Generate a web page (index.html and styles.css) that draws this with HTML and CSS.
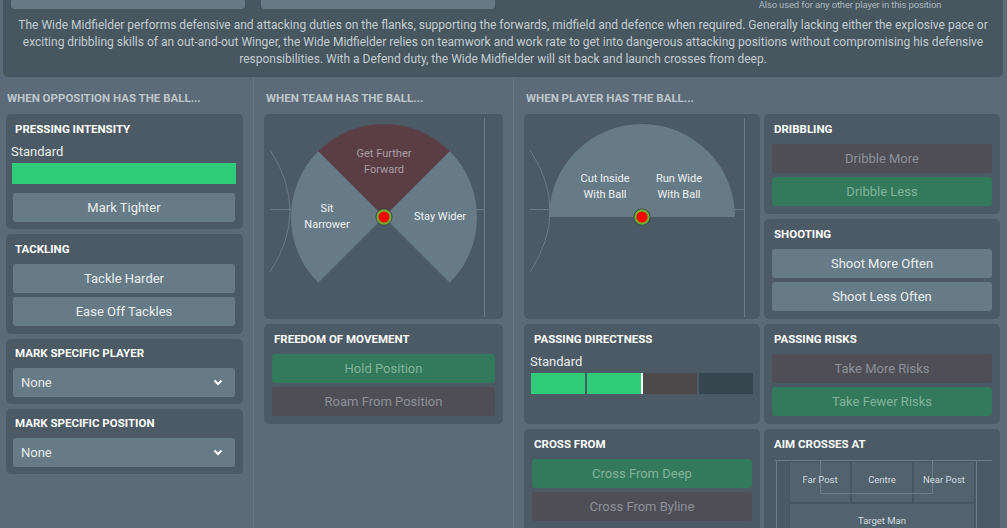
FILE: index.html
```html
<!DOCTYPE html>
<html>
<head>
<meta charset="utf-8">
<link rel="stylesheet" href="styles.css">
</head>
<body>
<header class="top">
  <div class="top-row">
    <div class="tab-btn"></div>
    <div class="tab-btn"></div>
    <div class="also">Also used for any other player in this position</div>
  </div>
  <p class="desc">The Wide Midfielder performs defensive and attacking duties on the flanks, supporting the forwards, midfield and defence when required. Generally lacking either the explosive pace or<br>exciting dribbling skills of an out-and-out Winger, the Wide Midfielder relies on teamwork and work rate to get into dangerous attacking positions without compromising his defensive<br>responsibilities. With a Defend duty, the Wide Midfielder will sit back and launch crosses from deep.</p>
</header>

<main class="cols">
  <section class="col col1">
    <h2 class="col-head">WHEN OPPOSITION HAS THE BALL...</h2>
    <div class="stack">
      <div class="card card-slider">
        <h3 class="card-title">PRESSING INTENSITY</h3>
        <div class="level">Standard</div>
        <div class="bar-full"></div>
        <div class="btn btn-neutral btn-after-bar">Mark Tighter</div>
      </div>
      <div class="card">
        <h3 class="card-title">TACKLING</h3>
        <div class="btns">
          <div class="btn btn-neutral">Tackle Harder</div>
          <div class="btn btn-neutral">Ease Off Tackles</div>
        </div>
      </div>
      <div class="card card-select">
        <h3 class="card-title">MARK SPECIFIC PLAYER</h3>
        <div class="select"><span>None</span><svg class="chev" width="10" height="7" viewBox="0 0 10 7"><path d="M1.5 1.5 L5 5 L8.5 1.5" fill="none" stroke="#ffffff" stroke-width="2"/></svg></div>
      </div>
      <div class="card card-select">
        <h3 class="card-title">MARK SPECIFIC POSITION</h3>
        <div class="select"><span>None</span><svg class="chev" width="10" height="7" viewBox="0 0 10 7"><path d="M1.5 1.5 L5 5 L8.5 1.5" fill="none" stroke="#ffffff" stroke-width="2"/></svg></div>
      </div>
    </div>
  </section>

  <section class="col col2">
    <h2 class="col-head">WHEN TEAM HAS THE BALL...</h2>
    <div class="stack">
      <div class="card diagram">
        <svg width="239" height="205" viewBox="0 0 239 205">
          <g stroke="#6a7c88" stroke-width="1" fill="none">
            <line x1="220.5" y1="4" x2="220.5" y2="203"/>
            <line x1="6" y1="95.5" x2="27" y2="95.5"/>
            <line x1="211" y1="95.5" x2="220" y2="95.5"/>
            <path d="M6 36 Q46 97 6 158"/>
          </g>
          <path d="M120 103 L54.24 37.24 A93 93 0 0 1 185.76 37.24 Z" fill="#5b3d45"/>
          <path d="M120 103 L54.24 37.24 A93 93 0 0 0 54.24 168.76 Z" fill="#677b87"/>
          <path d="M120 103 L185.76 37.24 A93 93 0 0 1 185.76 168.76 Z" fill="#677b87"/>
          <g font-size="11" text-anchor="middle" class="svgtxt">
            <text x="120" y="43" fill="#a99ea4">Get Further</text>
            <text x="120" y="59" fill="#a99ea4">Forward</text>
            <text x="63" y="98" fill="#eef2f4">Sit</text>
            <text x="63" y="114" fill="#eef2f4">Narrower</text>
            <text x="176" y="106" fill="#eef2f4">Stay Wider</text>
          </g>
          <circle cx="120" cy="103" r="8.5" fill="#2f3f48"/>
          <circle cx="120" cy="103" r="6.6" fill="#ff0000" stroke="#6fb030" stroke-width="2.2"/>
        </svg>
      </div>
      <div class="card">
        <h3 class="card-title">FREEDOM OF MOVEMENT</h3>
        <div class="btns">
          <div class="btn btn-on">Hold Position</div>
          <div class="btn btn-off">Roam From Position</div>
        </div>
      </div>
    </div>
  </section>

  <section class="col col3">
    <h2 class="col-head">WHEN PLAYER HAS THE BALL...</h2>
    <div class="grid">
      <div class="card diagram span2">
        <svg width="236" height="205" viewBox="0 0 236 205">
          <g stroke="#6a7c88" stroke-width="1" fill="none">
            <line x1="220.5" y1="4" x2="220.5" y2="203"/>
            <line x1="6" y1="95.5" x2="25" y2="95.5"/>
            <line x1="211" y1="95.5" x2="220" y2="95.5"/>
            <path d="M6 36 Q46 97 6 158"/>
          </g>
          <path d="M25 103 A93 93 0 0 1 211 103 Z" fill="#677b87"/>
          <g font-size="11" text-anchor="middle" fill="#eef2f4" class="svgtxt">
            <text x="81" y="68">Cut Inside</text>
            <text x="81" y="84">With Ball</text>
            <text x="155" y="68">Run Wide</text>
            <text x="155" y="84">With Ball</text>
          </g>
          <circle cx="118" cy="103" r="8.5" fill="#2f3f48"/>
          <circle cx="118" cy="103" r="6.6" fill="#ff0000" stroke="#6fb030" stroke-width="2.2"/>
        </svg>
      </div>
      <div class="card">
        <h3 class="card-title">DRIBBLING</h3>
        <div class="btns">
          <div class="btn btn-off">Dribble More</div>
          <div class="btn btn-on">Dribble Less</div>
        </div>
      </div>
      <div class="card">
        <h3 class="card-title">SHOOTING</h3>
        <div class="btns">
          <div class="btn btn-neutral">Shoot More Often</div>
          <div class="btn btn-neutral">Shoot Less Often</div>
        </div>
      </div>
      <div class="card card-slider card-pd">
        <h3 class="card-title">PASSING DIRECTNESS</h3>
        <div class="level">Standard</div>
        <div class="seg-bar">
          <div class="seg seg-g"></div>
          <div class="seg seg-g seg-mark"></div>
          <div class="seg seg-b"></div>
          <div class="seg seg-d"></div>
        </div>
      </div>
      <div class="card">
        <h3 class="card-title">PASSING RISKS</h3>
        <div class="btns">
          <div class="btn btn-off">Take More Risks</div>
          <div class="btn btn-on">Take Fewer Risks</div>
        </div>
      </div>
      <div class="card card-tall">
        <h3 class="card-title">CROSS FROM</h3>
        <div class="btns">
          <div class="btn btn-on">Cross From Deep</div>
          <div class="btn btn-off">Cross From Byline</div>
        </div>
      </div>
      <div class="card card-tall">
        <h3 class="card-title">AIM CROSSES AT</h3>
        <svg class="aim" width="235" height="90" viewBox="0 0 235 90">
          <rect x="25.5" y="2.5" width="61" height="41" fill="#52636d" stroke="#46565f"/>
          <rect x="87.5" y="2.5" width="61" height="41" fill="#52636d" stroke="#46565f"/>
          <rect x="149.5" y="2.5" width="61" height="41" fill="#52636d" stroke="#46565f"/>
          <rect x="25.5" y="44.5" width="185" height="45" fill="#52636d" stroke="#46565f"/>
          <g stroke="#6c7e89" fill="none">
            <line x1="11" y1="1.5" x2="228" y2="1.5"/>
            <line x1="12.5" y1="1" x2="12.5" y2="90"/>
            <line x1="212.5" y1="1" x2="212.5" y2="90"/>
            <rect x="56.5" y="1.5" width="112" height="33"/>
          </g>
          <g font-size="9.5" text-anchor="middle" fill="#d3dbe0" class="svgtxt">
            <text x="56" y="23.5">Far Post</text>
            <text x="118" y="23.5">Centre</text>
            <text x="180" y="23.5">Near Post</text>
            <text x="118" y="64.5">Target Man</text>
          </g>
        </svg>
      </div>
    </div>
  </section>
</main>
</body>
</html>
```

FILE: styles.css
```css
* { box-sizing: border-box; }
html, body {
  margin: 0;
  padding: 0;
}
body {
  width: 1007px;
  height: 528px;
  overflow: hidden;
  background: #5c6b77;
  font-family: "Roboto", "Noto Sans", sans-serif;
  color: #e8edf0;
}

/* top description panel */
.top {
  margin: 0 4px 0 3px;
  height: 77px;
  background: #47565f;
  border-radius: 0 0 5px 5px;
}
.top-row {
  display: flex;
  height: 9px;
  padding-left: 8px;
}
.tab-btn {
  width: 234px;
  height: 9px;
  background: #667a86;
  border-radius: 0 0 4px 4px;
  margin-right: 16px;
}
.also {
  margin-left: 247px;
  width: 184px;
  text-align: center;
  font-size: 9.5px;
  line-height: 10px;
  letter-spacing: -0.15px;
  color: #aeb9c0;
  white-space: nowrap;
}
.desc {
  margin: 8px 0 0;
  text-align: center;
  font-size: 12px;
  line-height: 17px;
  color: #c3cdd3;
  white-space: nowrap;
}

/* columns */
.cols {
  display: flex;
  height: 451px;
}
.col {
  padding-top: 15px;
  border-right: 1px solid #667682;
}
.col1 { width: 254px; padding-left: 6px; }
.col2 { width: 260px; padding-left: 10px; }
.col3 { flex: 1; padding-left: 10px; border-right: none; }

.col-head {
  margin: 0 0 10px 1px;
  height: 12px;
  font-size: 11.5px;
  line-height: 12px;
  font-weight: 700;
  color: #bcc6cc;
  white-space: nowrap;
}
.col2 .col-head, .col3 .col-head { margin-left: 2px; }

.stack {
  display: flex;
  flex-direction: column;
  gap: 5px;
}
.col1 .stack { width: 237px; }
.col2 .stack { width: 239px; }

.grid {
  display: grid;
  grid-template-columns: 236px 236px;
  grid-template-rows: 100px 100px 100px auto;
  column-gap: 4px;
  row-gap: 5px;
}
.span2 { grid-row: span 2; }

/* cards */
.card {
  background: #4b5a64;
  border-radius: 5px;
  padding: 8px 8px 8px;
}
.col1 .card { padding-left: 7px; padding-right: 8px; }
.col1 .card-select { padding-top: 7px; padding-bottom: 7px; }
.card-title {
  margin: 0 0 8px 2px;
  font-size: 11.5px;
  line-height: 14px;
  font-weight: 700;
  color: #ffffff;
  white-space: nowrap;
}
.card-select .card-title { margin-bottom: 8px; }
.card-tall { height: 120px; }

.btns {
  display: flex;
  flex-direction: column;
  gap: 4px;
}
.btn {
  height: 29px;
  border-radius: 3px;
  font-size: 13px;
  line-height: 29px;
  text-align: center;
  white-space: nowrap;
}
.btn-neutral { background: #677b87; color: #e9eef1; }
.btn-on { background: #33795b; color: #83b39c; }
.btn-off { background: #4f4e57; color: #8d9097; }

/* slider cards */
.card-slider { padding-bottom: 7px; }
.level {
  margin-left: -2px;
  font-size: 13px;
  line-height: 15px;
  color: #e8edf0;
}
.bar-full {
  margin: 4px -1px 0 -1px;
  height: 21px;
  background: #2ecc78;
}
.btn-after-bar { margin-top: 9px; }

.card-pd { padding-left: 7px; padding-right: 7px; }
.card-pd .card-title { margin-left: 3px; }
.card-pd .level { margin-left: -1px; }
.seg-bar {
  margin-top: 4px;
  display: flex;
  gap: 2px;
  height: 21px;
}
.seg { flex: 1; position: relative; }
.seg-g { background: #2ecc78; }
.seg-b { background: #4d4849; }
.seg-d { background: #36474f; }
.seg-mark::after {
  content: "";
  position: absolute;
  right: -2px;
  top: 0;
  width: 2px;
  height: 21px;
  background: #ffffff;
}

/* select */
.select {
  height: 29px;
  border-radius: 3px;
  background: #677b87;
  display: flex;
  align-items: center;
  justify-content: space-between;
  padding: 0 12px 0 8px;
  font-size: 13px;
  color: #e4eaed;
}
.chev { display: block; }

/* diagrams */
.diagram {
  padding: 0;
  height: 205px;
}
.diagram svg { display: block; }
.svgtxt { font-family: "Roboto", "Noto Sans", sans-serif; }
.aim {
  display: block;
  margin: 5px -8px 0;
}
```
